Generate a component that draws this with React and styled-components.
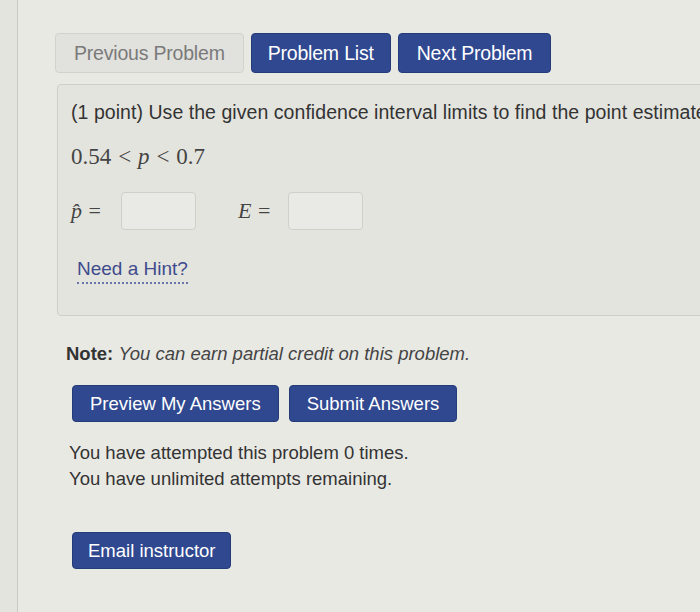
import React from "react";
import styled, { createGlobalStyle } from "styled-components";

const GlobalStyle = createGlobalStyle`
  html, body {
    margin: 0;
    padding: 0;
    background: #e9e9e4;
    font-family: "Liberation Sans", Arial, sans-serif;
    color: #333;
  }
`;

export default function App() {
  return (
    <>
      <GlobalStyle />
      <Page>
        <Sidebar />
        <Main>
          <NavRow>
            <NavButton muted>Previous Problem</NavButton>
            <NavButton>Problem List</NavButton>
            <NavButton wide>Next Problem</NavButton>
          </NavRow>

          <ProblemBox>
            <Statement>
              (1 point) Use the given confidence interval limits to find the
              point estimate and the margin of error E.
            </Statement>
            <MathLine>
              0.54<Rel>&lt;</Rel>
              <Var>p</Var>
              <Rel>&lt;</Rel>0.7
            </MathLine>
            <AnswerRow>
              <MathLabel>
                <Var>p̂</Var>
                <Rel>=</Rel>
              </MathLabel>
              <AnswerInput />
              <MathLabel wide>
                <Var>E</Var>
                <Rel>=</Rel>
              </MathLabel>
              <AnswerInput />
            </AnswerRow>
            <HintLink>Need a Hint?</HintLink>
          </ProblemBox>

          <Footer>
            <Note>
              <b>Note:</b> <i>You can earn partial credit on this problem.</i>
            </Note>
            <ActionRow>
              <ActionButton>Preview My Answers</ActionButton>
              <ActionButton>Submit Answers</ActionButton>
            </ActionRow>
            <Attempts>
              You have attempted this problem 0 times.
              <br />
              You have unlimited attempts remaining.
            </Attempts>
            <ActionButton narrow>Email instructor</ActionButton>
          </Footer>
        </Main>
      </Page>
    </>
  );
}

const Page = styled.div`
  display: flex;
  width: 700px;
  height: 612px;
  overflow: hidden;
`;

const Sidebar = styled.div`
  flex: 0 0 17px;
  background: #e4e4df;
  border-right: 1px solid #c9c9c3;
`;

const Main = styled.div`
  flex: 1;
  min-width: 0;
  padding: 33px 0 0 37px;
  overflow: hidden;
`;

const NavRow = styled.div`
  display: flex;
  gap: 7px;
`;

const NavButton = styled.div`
  height: 40px;
  box-sizing: border-box;
  display: flex;
  align-items: center;
  padding: 0 ${(p) => (p.muted ? "18px" : p.wide ? "18px" : "16px")};
  border-radius: 4px;
  font-size: 19.5px;
  letter-spacing: -0.2px;
  background: ${(p) => (p.muted ? "#e1e1dd" : "#2f4890")};
  color: ${(p) => (p.muted ? "#7a7a7a" : "#fff")};
  border: 1px solid ${(p) => (p.muted ? "#d2d2cd" : "#253c7a")};
`;

const ProblemBox = styled.div`
  margin: 11px 0 0 2px;
  width: 700px;
  height: 232px;
  box-sizing: border-box;
  background: #e4e4df;
  border: 1px solid #cfcfca;
  border-radius: 4px;
  padding: 16px 0 0 13px;
`;

const Statement = styled.div`
  font-size: 19.5px;
  letter-spacing: 0.05px;
  white-space: nowrap;
  color: #333;
`;

const MathLine = styled.div`
  margin-top: 20px;
  font-family: "Liberation Serif", "Times New Roman", serif;
  font-size: 23px;
  line-height: 26px;
  color: #444;
`;

const Var = styled.i`
  font-family: "Liberation Serif", "Times New Roman", serif;
`;

const Rel = styled.span`
  margin: 0 0.3em;
`;

const AnswerRow = styled.div`
  display: flex;
  align-items: center;
  margin-top: 22px;
`;

const MathLabel = styled.span`
  font-family: "Liberation Serif", "Times New Roman", serif;
  font-size: 22px;
  color: #444;
  margin-left: ${(p) => (p.wide ? "42px" : "0")};
  width: 50px;
`;

const AnswerInput = styled.div`
  width: 75px;
  height: 38px;
  box-sizing: border-box;
  background: #e9e9e5;
  border: 1px solid #d0d0cb;
  border-radius: 4px;
`;

const HintLink = styled.span`
  display: inline-block;
  margin: 28px 0 0 6px;
  font-size: 19px;
  color: #3e4b8c;
  border-bottom: 2px dotted #6b74a8;
  padding-bottom: 2px;
`;

const Footer = styled.div`
  padding: 27px 0 0 11px;
`;

const Note = styled.div`
  font-size: 18.5px;
  color: #444;
  b {
    color: #333;
  }
`;

const ActionRow = styled.div`
  display: flex;
  gap: 10px;
  margin: 20px 0 0 6px;
`;

const ActionButton = styled.div`
  height: 37px;
  box-sizing: border-box;
  display: inline-flex;
  align-items: center;
  padding: 0 ${(p) => (p.narrow ? "15px" : "17px")};
  border-radius: 4px;
  background: #2f4890;
  border: 1px solid #253c7a;
  color: #fff;
  font-size: 18.5px;
  margin-left: 6px;
  ${ActionRow} & {
    margin-left: 0;
  }
`;

const Attempts = styled.div`
  margin: 18px 0 40px 3px;
  font-size: 18.5px;
  line-height: 26px;
  color: #333;
`;
